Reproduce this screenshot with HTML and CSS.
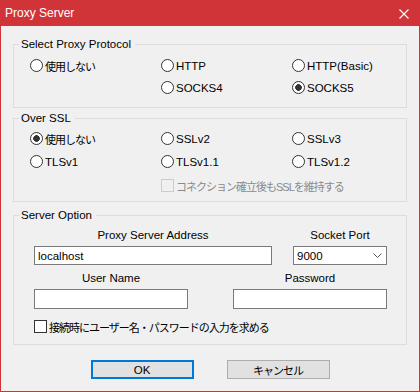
FILE: index.html
```html
<!DOCTYPE html>
<html lang="ja">
<head>
<meta charset="UTF-8">
<title>Proxy Server</title>
<link rel="stylesheet" href="styles.css">
</head>
<body>
  <div class="window">
    <div class="titlebar">
      <span class="title">Proxy Server</span>
      <svg class="close" width="10" height="10" viewBox="0 0 10 10">
        <path d="M0.5 0.5 L9.5 9.5 M9.5 0.5 L0.5 9.5" stroke="#fff" stroke-width="1.1" fill="none"/>
      </svg>
    </div>

    <fieldset class="group protocol">
      <legend>Select Proxy Protocol</legend>
      <div class="options">
        <label class="opt"><input type="radio" name="proto"><span class="ja">使用しない</span></label>
        <label class="opt"><input type="radio" name="proto">HTTP</label>
        <label class="opt"><input type="radio" name="proto">HTTP(Basic)</label>
        <span></span>
        <label class="opt"><input type="radio" name="proto">SOCKS4</label>
        <label class="opt"><input type="radio" name="proto" checked>SOCKS5</label>
      </div>
    </fieldset>

    <fieldset class="group ssl">
      <legend>Over SSL</legend>
      <div class="options">
        <label class="opt"><input type="radio" name="ssl" checked><span class="ja">使用しない</span></label>
        <label class="opt"><input type="radio" name="ssl">SSLv2</label>
        <label class="opt"><input type="radio" name="ssl">SSLv3</label>
        <label class="opt"><input type="radio" name="ssl">TLSv1</label>
        <label class="opt"><input type="radio" name="ssl">TLSv1.1</label>
        <label class="opt"><input type="radio" name="ssl">TLSv1.2</label>
        <span></span>
        <label class="opt keep disabled"><input type="checkbox" disabled><span class="ja">コネクション確立後もSSLを維持する</span></label>
      </div>
    </fieldset>

    <fieldset class="group server">
      <legend>Server Option</legend>
      <div class="server-body">
        <div class="fields">
          <div class="field address">
            <span class="caption">Proxy Server Address</span>
            <input class="textbox" type="text" value="localhost">
          </div>
          <div class="field port">
            <span class="caption">Socket Port</span>
            <div class="combo">
              <span>9000</span>
              <svg width="9" height="5" viewBox="0 0 9 5">
                <path d="M0.5 0.5 L4.5 4.5 L8.5 0.5" stroke="#555" stroke-width="1" fill="none"/>
              </svg>
            </div>
          </div>
        </div>
        <div class="fields second">
          <div class="field user">
            <span class="caption">User Name</span>
            <input class="textbox tall" type="text">
          </div>
          <div class="field pass">
            <span class="caption">Password</span>
            <input class="textbox tall" type="password">
          </div>
        </div>
        <label class="opt ask"><input type="checkbox"><span class="ja">接続時にユーザー名・パスワードの入力を求める</span></label>
      </div>
    </fieldset>

    <div class="buttons">
      <button class="btn default">OK</button>
      <button class="btn"><span class="ja">キャンセル</span></button>
    </div>
  </div>
</body>
</html>
```

FILE: styles.css
```css
body {
  margin: 0;
  font-family: "Liberation Sans", "Noto Sans CJK JP", sans-serif;
  font-size: 11.5px;
  color: #000;
}
/* the dialog frame */
.window {
  width: 420px;
  height: 392px;
  box-sizing: border-box;
  border: 1px solid #d13438;
  border-top: none;
  background-color: #f0f0f0;
}
.titlebar {
  height: 26px;
  background-color: #d13438;
  display: flex;
  align-items: center;
  justify-content: space-between;
  padding: 0 10px 0 4px;
  color: white;
}
.title {
  font-size: 12px;
}
.close {
  margin-top: 1px;
}
/* group boxes */
.group {
  margin: 0 12px;
  padding: 0;
  border: 1px solid #dcdcdc;
  min-inline-size: 0;
}
.group legend {
  margin-left: 5px;
  padding: 0 4px 0 2px;
  line-height: 15px;
}
.protocol {
  margin-top: 11px;
  padding: 5px 0 11px;
}
.ssl {
  margin-top: 3px;
  padding: 4px 0 7px;
}
.server {
  margin-top: 6px;
}
.server-body {
  padding: 5px 19px 9px 20px;
}
.options {
  display: grid;
  grid-template-columns: 131px 131px 1fr;
  row-gap: 5px;
  padding-left: 16px;
}
.ssl .options {
  row-gap: 6px;
}
.opt {
  display: flex;
  align-items: center;
  height: 17px;
  white-space: nowrap;
}
.opt input {
  appearance: none;
  width: 13px;
  height: 13px;
  margin: 0 2px 0 0;
  border: 1px solid #333;
  background-color: #fff;
  flex: none;
}
.opt input[type="radio"] {
  border-radius: 50%;
}
.opt input[type="radio"]:checked {
  background: radial-gradient(circle, #333 3px, #fff 3.6px);
}
.keep {
  grid-column: span 2;
  margin-top: 1px;
}
.disabled {
  color: #8a8a8a;
}
.disabled input {
  border-color: #cccccc;
  background-color: #f0f0f0;
}
.ja {
  font-size: 11px;
  letter-spacing: -1px;
}
/* server option fields */
.fields {
  display: flex;
  justify-content: space-between;
}
.fields.second {
  margin-top: 6px;
}
.field {
  display: flex;
  flex-direction: column;
  align-items: center;
}
.caption {
  line-height: 15px;
  margin-bottom: 3px;
}
.address { width: 238px; }
.port { width: 94px; }
.user, .pass { width: 154px; }
.textbox {
  box-sizing: border-box;
  width: 100%;
  height: 19px;
  margin: 0;
  padding: 0 3px;
  border: 1px solid #7a7a7a;
  background-color: #fff;
  font: inherit;
  outline: none;
}
.textbox.tall {
  height: 20px;
}
.combo {
  box-sizing: border-box;
  width: 100%;
  height: 19px;
  border: 1px solid #7a7a7a;
  background-color: #fff;
  display: flex;
  align-items: center;
  justify-content: space-between;
  padding: 0 4px 0 3px;
}
.ask {
  margin-top: 9px;
}
/* dialog buttons */
.buttons {
  display: flex;
  justify-content: center;
  gap: 33px;
  margin-top: 15px;
}
.btn {
  box-sizing: border-box;
  width: 103px;
  height: 19px;
  padding: 0;
  border: 1px solid #adadad;
  background-color: #e1e1e1;
  font: inherit;
  color: #000;
}
.btn.default {
  border: 2px solid #0078d7;
}
```
